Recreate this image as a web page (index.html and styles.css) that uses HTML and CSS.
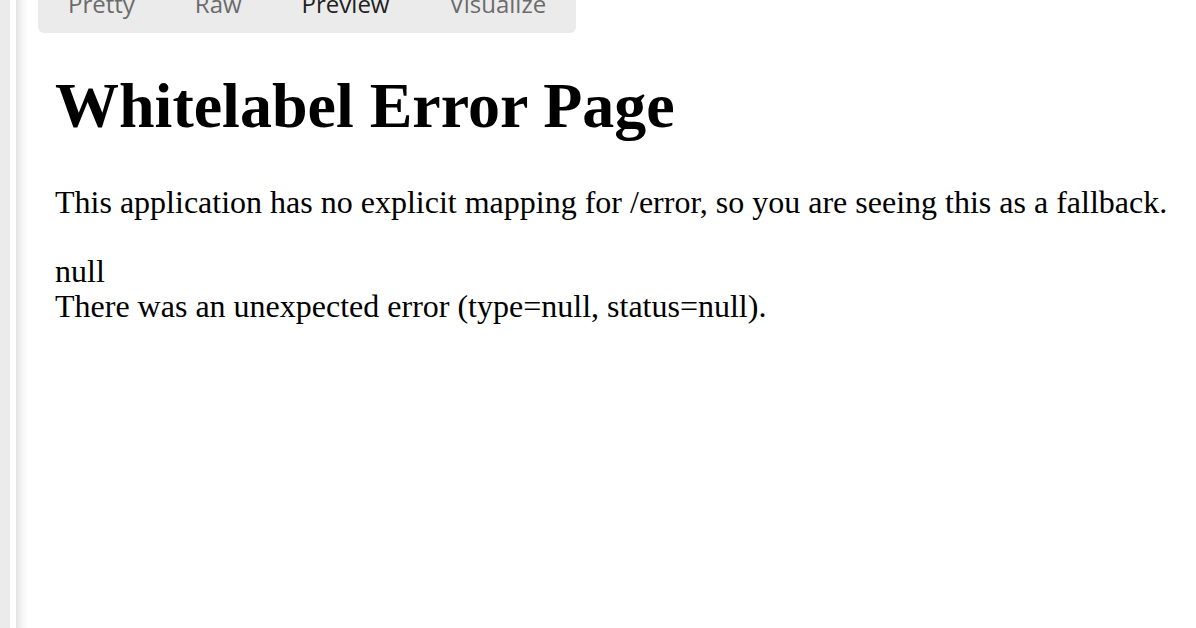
FILE: index.html
```html
<!DOCTYPE html>
<html lang="en">
<head>
<meta charset="utf-8">
<title>Whitelabel Error Page</title>
<link rel="stylesheet" href="styles.css">
</head>
<body>
<div class="app">
  <div class="rail"></div>
  <div class="pane">
    <nav class="tabs">
      <span class="tab">Pretty</span>
      <span class="tab">Raw</span>
      <span class="tab tab-active">Preview</span>
      <span class="tab">Visualize</span>
    </nav>
    <div class="preview">
      <h1 class="title">Whitelabel Error Page</h1>
      <p class="lead">This application has no explicit mapping for /error, so you are seeing this as a fallback.</p>
      <div class="line">null</div>
      <div class="line">There was an unexpected error (type=null, status=null).</div>
    </div>
  </div>
</div>
</body>
</html>
```

FILE: styles.css
```css
html, body {
  margin: 0;
  padding: 0;
  background: #ffffff;
}

.app {
  display: flex;
  height: 628px;
  overflow: hidden;
}

.rail {
  width: 10px;
  flex: 0 0 10px;
  background: #ebebeb;
}

.pane {
  flex: 1;
  margin-left: 6px;
  background: linear-gradient(to right, #e2e2e2 0px, #ececec 3px, #f6f6f6 7px, #ffffff 12px) no-repeat;
  background-size: 12px 100%;
}

.tabs {
  display: flex;
  width: max-content;
  margin: -12px 0 0 22px;
  padding: 0 0 13px 0;
  background: #ebebeb;
  border-radius: 0 0 6px 6px;
  font-family: "Open Sans", "Noto Sans", sans-serif;
  font-size: 24px;
  line-height: 32px;
}

.tab {
  padding: 0 30px;
  color: #6b6b6b;
}

.tab-active {
  color: #212121;
}

.preview {
  padding-left: 39px;
  font-family: "Liberation Serif", "Times New Roman", serif;
  font-size: 32px;
  line-height: 35px;
  color: #000000;
}

.title {
  margin: 38px 0 0 0;
  font-size: 64px;
  line-height: 69px;
  font-weight: bold;
}

.lead {
  margin: 45px 0 34px 0;
}

.line {
  margin: 0;
}
```
